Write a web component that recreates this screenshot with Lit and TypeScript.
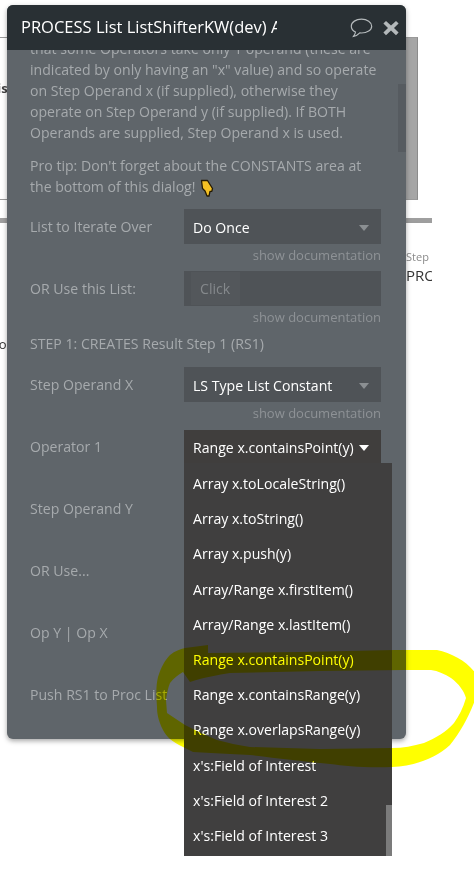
import { LitElement, html, css, svg } from "lit";
import { customElement } from "lit/decorators.js";

const OPTIONS = [
  "Array x.toLocaleString()",
  "Array x.toString()",
  "Array x.push(y)",
  "Array/Range x.firstItem()",
  "Array/Range x.lastItem()",
  "Range x.containsPoint(y)",
  "Range x.containsRange(y)",
  "Range x.overlapsRange(y)",
  "x's:Field of Interest",
  "x's:Field of Interest 2",
  "x's:Field of Interest 3",
];

@customElement("app-root")
export class AppRoot extends LitElement {
  static styles = css`
    :host {
      display: block;
      position: relative;
      width: 474px;
      height: 869px;
      overflow: hidden;
      background: #fff;
      font-family: "Open Sans", "Noto Sans", sans-serif;
      font-size: 14px;
    }
    .page {
      width: 432px;
      padding-top: 37px;
      overflow: hidden;
    }
    .topbox {
      width: 418px;
      height: 163px;
      box-sizing: border-box;
      display: flex;
      border-top: 1px solid #9a9a9a;
      border-bottom: 1px solid #9a9a9a;
      border-right: 1px solid #8c8c8c;
    }
    .topbox-left {
      width: 7px;
      background: #fff;
      overflow: hidden;
      padding-top: 41px;
      font-size: 13px;
      font-weight: 700;
      color: #444;
      white-space: nowrap;
      line-height: 18px;
    }
    .topbox-left span { display: block; margin-left: -10px; }
    .topbox-right { flex: 1; background: #a6a6a6; }
    .rule {
      margin-top: 18px;
      height: 5px;
      background: #a0a0a0;
    }
    .section {
      height: 174px;
      background: #fff;
      box-shadow: 0 8px 14px rgba(0, 0, 0, 0.16);
      display: grid;
      grid-template-columns: 7px 1fr 26px;
      overflow: hidden;
    }
    .sec-left {
      overflow: hidden;
      white-space: nowrap;
      padding-top: 111px;
      line-height: 20px;
      color: #333;
      font-size: 13px;
    }
    .sec-left span { display: block; margin-left: -9px; }
    .sec-right { grid-column: 3; padding-top: 25px; white-space: nowrap; overflow: hidden; }
    .sec-right .s { font-size: 11px; line-height: 17px; color: #8a8a8a; }
    .sec-right .p { font-size: 15px; line-height: 20px; color: #333; }

    .dialog {
      position: absolute;
      left: 7px;
      top: 5px;
      width: 399px;
      height: 734px;
      background: #5f656a;
      border-radius: 6px;
      box-shadow: 0 2px 5px rgba(0, 0, 0, 0.35);
      display: flex;
      flex-direction: column;
      overflow: hidden;
    }
    .head {
      flex: none;
      height: 45px;
      background: #293034;
      display: flex;
      align-items: center;
      padding: 0 7px 0 14px;
      color: #fff;
    }
    .title {
      width: 256px;
      overflow: hidden;
      white-space: nowrap;
      font-size: 16.5px;
      line-height: 24px;
      margin-top: -1px;
    }
    .head-icons {
      margin-left: auto;
      display: flex;
      align-items: center;
      gap: 10px;
    }
    .head-icons svg { display: block; }
    .body {
      flex: 1;
      position: relative;
      overflow: hidden;
      padding: 0 25px 0 23px;
      color: #a6aaad;
      font-size: 14.1px;
      line-height: 21px;
    }
    .vbar {
      position: absolute;
      right: 0;
      top: 34px;
      width: 8px;
      height: 68px;
      background: #565b60;
    }
    .intro { margin: -12px 0 0; }
    .tip { margin: 12px 0 0; }
    .hand { display: inline-block; vertical-align: -5px; margin-left: 1px; }
    .row {
      display: grid;
      grid-template-columns: 154px 197px;
      align-items: center;
      height: 35px;
    }
    .first { margin-top: 12px; }
    .label { white-space: nowrap; }
    .field {
      height: 35px;
      box-sizing: border-box;
      background: #4f5357;
      color: #fff;
      padding: 2px 9px 0;
      display: flex;
      align-items: center;
      justify-content: space-between;
      font-size: 14.1px;
    }
    .field.open { background: #403e3d; height: 34px; }
    .arrow {
      width: 0;
      height: 0;
      border-left: 5.5px solid transparent;
      border-right: 5.5px solid transparent;
      border-top: 6px solid #8b8f92;
      margin-right: 3px;
    }
    .open .arrow { border-top-color: #fff; border-left-width: 5px; border-right-width: 5px; }
    .click {
      background: #53575b;
      color: #85898c;
      padding: 0 10px 0 9px;
      margin-left: -2px;
      margin-top: -2px;
      height: 33px;
      line-height: 33px;
    }
    .doc {
      text-align: right;
      height: 27px;
      line-height: 22px;
      color: #8e9296;
      font-size: 13px;
    }
    .doc.tall { line-height: 23px; }
    .step { height: 34px; line-height: 21px; white-space: nowrap; }
    .plain { margin-top: 27px; }

    .menu {
      position: absolute;
      left: 184px;
      top: 463px;
      width: 208px;
      height: 393px;
      background: #403f3f;
      padding-top: 3px;
      box-sizing: border-box;
      color: #fff;
      font-size: 14.1px;
      overflow: hidden;
    }
    .opt {
      height: 35.2px;
      line-height: 35.2px;
      padding-left: 9px;
      white-space: nowrap;
    }
    .menubar {
      position: absolute;
      right: 0;
      bottom: 0;
      width: 6px;
      height: 51px;
      background: #7b7b7b;
    }
    .scribble {
      position: absolute;
      left: 0;
      top: 0;
      mix-blend-mode: multiply;
      pointer-events: none;
    }
  `;

  private field(text: string, open = false) {
    return html`<div class="field ${open ? "open" : ""}"><span>${text}</span><i class="arrow"></i></div>`;
  }

  render() {
    return html`
      <div class="page">
        <div class="topbox">
          <div class="topbox-left"><span>Lis</span></div>
          <div class="topbox-right"></div>
        </div>
        <div class="rule"></div>
        <div class="section">
          <div class="sec-left"><span>Pos</span></div>
          <div class="sec-right">
            <div class="s">Step</div>
            <div class="p">PROCESS</div>
          </div>
        </div>
      </div>

      <div class="dialog">
        <div class="head">
          <div class="title">PROCESS List ListShifterKW(dev) Actions</div>
          <div class="head-icons">
            <svg width="23" height="20" viewBox="0 0 23 20" fill="none" stroke="#b4b9bb" stroke-width="1.2">
              <path d="M11.5 1.2C6 1.2 1.3 4 1.3 8.2c0 2.5 1.7 4.6 4.2 5.8-.2 1.6-1 3-2 4.4 2.6-.5 4.8-1.900 6.300-3.500.6.1 1.200.1 1.700.1 5.600 0 10.200-3 10.200-6.800S17.100 1.200 11.500 1.200z" />
            </svg>
            <svg width="16" height="16" viewBox="0 0 16 16">
              <path d="M3 1l5 4.600L13 1l2.600 2.600L11 8l4.600 4.500L13 15.200 8 10.600l-5 4.600L.4 12.500 5 8 .4 3.600z" fill="#b3b8ba" />
            </svg>
          </div>
        </div>
        <div class="body">
          <div class="vbar"></div>
          <p class="intro">that some Operators take only 1 operand (these are indicated by only having an "x" value) and so operate on Step Operand x (if supplied), otherwise they operate on Step Operand y (if supplied). If BOTH Operands are supplied, Step Operand x is used.</p>
          <p class="tip">Pro tip: Don't forget about the CONSTANTS area at the bottom of this dialog!
            <svg class="hand" width="14" height="18" viewBox="0 0 14 18">
              <path d="M1.500 1.500H7.500L12.500 9.500L11.800 12.300H10L9 17H7L5 12L2.500 9.500z" fill="#f4c024" stroke="#241a04" stroke-width="1.300" stroke-linejoin="round" />
            </svg>
          </p>
          <div class="row first"><div class="label">List to Iterate Over</div>${this.field("Do Once")}</div>
          <div class="doc">show documentation</div>
          <div class="row">
            <div class="label">OR Use this List:</div>
            <div class="field"><span class="click">Click</span></div>
          </div>
          <div class="doc">show documentation</div>
          <div class="step">STEP 1: CREATES Result Step 1 (RS1)</div>
          <div class="row"><div class="label">Step Operand X</div>${this.field("LS Type List Constant")}</div>
          <div class="doc tall">show documentation</div>
          <div class="row"><div class="label">Operator 1</div>${this.field("Range x.containsPoint(y)", true)}</div>
          <div class="row plain"><div class="label">Step Operand Y</div></div>
          <div class="row plain"><div class="label">OR Use...</div></div>
          <div class="row plain"><div class="label">Op Y | Op X</div></div>
          <div class="row plain"><div class="label">Push RS1 to Proc List</div></div>
        </div>
      </div>

      <div class="menu">
        ${OPTIONS.map((o) => html`<div class="opt">${o}</div>`)}
        <div class="menubar"></div>
      </div>

      <svg class="scribble" width="474" height="869" viewBox="0 0 474 869">
        ${svg`<path fill="#ffff00" fill-rule="evenodd" d="M208 645L208 653L300 652L394 650L437 650C452 653 468 662 476 674L478 692C470 715 462 730 450 745C436 758 415 766 392 767C365 768 345 766 330 764C300 761 275 758 250 755C230 754 210 753 193 752L183 747C172 742 166 736 163 730C158 720 157 713 157 707C156 695 156 685 158 677C161 667 165 660 170 655C175 651 180 649 185 648Z
          M190 682C205 677 218 675 230 673L320 671L404 670L431 670C438 671 445 674 451 678C459 684 464 691 466 698C463 708 459 716 454 723C446 732 436 738 424 743C413 746 403 748 392 748L320 749L250 747C238 745 228 743 217 740C205 735 195 730 185 725L167 713L166 700C167 693 168 688 170 683C174 678 178 675 183 672Z" />`}
      </svg>
    `;
  }
}
